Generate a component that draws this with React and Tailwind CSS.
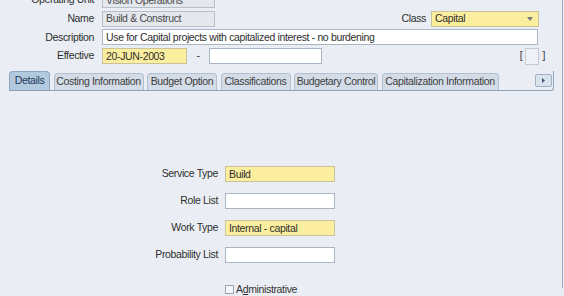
function Field({ w, tone = 'white', children, className = '' }) {
  const tones = {
    white: 'bg-white border-[#a9b6c4]',
    yellow: 'bg-[#fcee9f] border-[#c9c29a]',
    gray: 'bg-[#e4e8ed] border-[#b6c0cb] text-[#4a4a4a]',
  }
  return (
    <div
      className={`flex h-[16px] shrink-0 items-center overflow-hidden whitespace-nowrap border px-[3px] leading-none ${tones[tone]} ${className}`}
      style={{ width: w }}
    >
      {children}
    </div>
  )
}

function TopRow({ label, children }) {
  return (
    <div className="flex h-[16px] items-center">
      <span className="w-[102px] shrink-0 pr-[8px] text-right">{label}</span>
      {children}
    </div>
  )
}

function DetailRow({ label, children }) {
  return (
    <div className="flex h-[16px] items-center">
      <span className="w-[225px] shrink-0 pr-[7px] text-right">{label}</span>
      {children}
    </div>
  )
}

const tabs = [
  { name: 'Details', w: 41, active: true },
  { name: 'Costing Information', w: 90 },
  { name: 'Budget Option', w: 70 },
  { name: 'Classifications', w: 70 },
  { name: 'Budgetary Control', w: 84 },
  { name: 'Capitalization Information', w: 117 },
]

export default function App() {
  return (
    <div className="h-[296px] w-[564px] overflow-hidden bg-[#eaeef4]">
      <div className="h-[296px] w-[563px] border-r border-[#9aa9bb] font-['Liberation_Sans',Arial,sans-serif] text-[10.5px] tracking-[-0.35px] text-[#2e2e2e]">
        {/* header fields */}
        <div className="-mt-[8px] flex flex-col gap-[2.7px]">
          <TopRow label="Operating Unit">
            <Field w={113} tone="gray">Vision Operations</Field>
          </TopRow>
          <TopRow label="Name">
            <Field w={113} tone="gray">Build &amp; Construct</Field>
            <span className="ml-auto pr-[5px]">Class</span>
            <Field w={108} tone="yellow" className="mr-[23px] justify-between pr-[5px]">
              <span>Capital</span>
              <svg width="6" height="4" viewBox="0 0 6 4">
                <path d="M0 0h6L3 4z" fill="#7a7a7a" />
              </svg>
            </Field>
          </TopRow>
          <TopRow label="Description">
            <Field w={436}>Use for Capital projects with capitalized interest - no burdening</Field>
          </TopRow>
          <TopRow label="Effective">
            <Field w={85} tone="yellow">20-JUN-2003</Field>
            <span className="w-[22px] text-center">-</span>
            <Field w={113} />
            <div className="ml-auto mr-[17px] flex items-center gap-[3px] text-[#333]">
              <span>[</span>
              <div className="h-[17px] w-[14px] border border-[#c2cbd5] bg-[#eef1f5]" />
              <span>]</span>
            </div>
          </TopRow>
        </div>

        {/* tab strip */}
        <div className="mt-[7px] ml-[9px] mr-[8px] flex items-end rounded-br-[3px] border-r border-b border-[#8fa2b8]">
          <div className="flex items-end gap-[3.5px]">
            {tabs.map((t) => (
              <div
                key={t.name}
                className={`flex items-center justify-center rounded-t-[4px] border border-b-0 whitespace-nowrap ${
                  t.active
                    ? 'h-[19px] border-[#8ea6c1] bg-[#b3c9de] text-[#1e3a5c]'
                    : 'h-[17px] border-[#b3c0cf] bg-[#d4dce7] text-[#3e3e3e]'
                }`}
                style={{ width: t.w }}
              >
                {t.name}
              </div>
            ))}
          </div>
          <div className="mb-[3px] ml-auto mr-[1px] flex h-[13px] w-[17px] items-center justify-center rounded-[2px] border border-[#9fb1c6] bg-[#d9e3ee]">
            <svg width="3" height="5" viewBox="0 0 3 5">
              <path d="M0 0l3 2.5L0 5z" fill="#3c5474" />
            </svg>
          </div>
        </div>

        {/* details content */}
        <div className="mt-[75px] flex flex-col gap-[11px]">
          <DetailRow label="Service Type">
            <Field w={110} tone="yellow">Build</Field>
          </DetailRow>
          <DetailRow label="Role List">
            <Field w={110} />
          </DetailRow>
          <DetailRow label="Work Type">
            <Field w={110} tone="yellow">Internal - capital</Field>
          </DetailRow>
          <DetailRow label="Probability List">
            <Field w={110} />
          </DetailRow>
        </div>
        <div className="mt-[20px] flex items-center pl-[225px]">
          <div className="h-[9px] w-[9px] border border-[#9aa7b5] bg-[#f4f6f9]" />
          <span className="ml-[2px] leading-[12px] text-[#333]">
            A<span className="underline">d</span>ministrative
          </span>
        </div>
      </div>
    </div>
  )
}
